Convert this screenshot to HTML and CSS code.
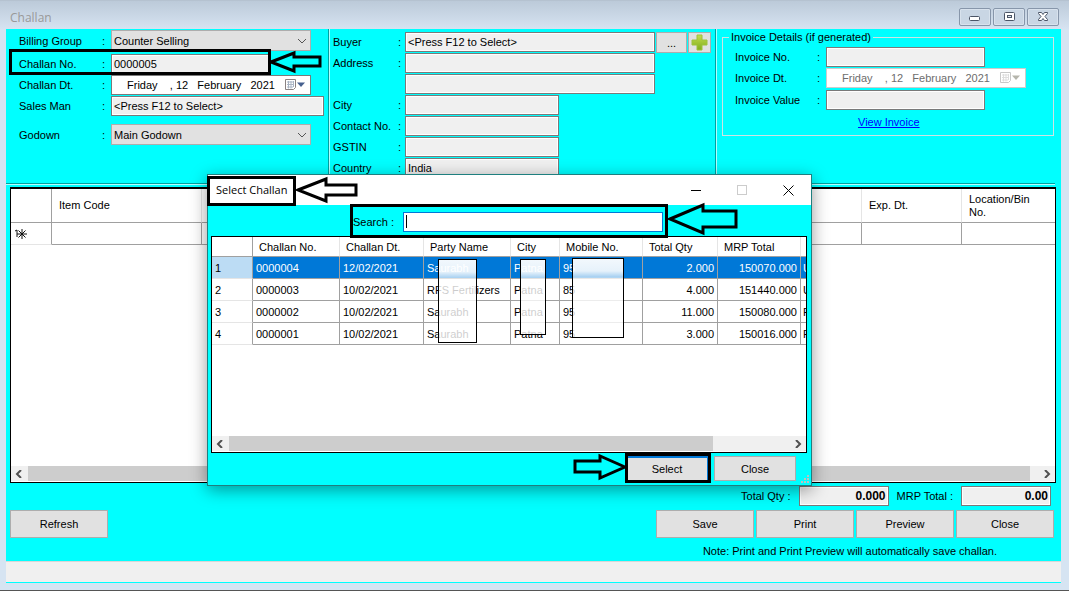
FILE: index.html
```html
<!DOCTYPE html>
<html lang="en">
	<head>
		<meta charset="utf-8" />
		<meta name="viewport" content="width=device-width, initial-scale=1" />
		<title>Challan</title>
		<link rel="stylesheet" href="styles.css">
	</head>

	<body>
		<div class="window">
			<header class="titlebar">
				<h1>Challan</h1>
				<div class="window-buttons">
					<button type="button" aria-label="Minimize">
						<svg width="14" height="12" viewBox="0 0 14 12"><rect x="1.5" y="5.5" width="10" height="4" rx="1" fill="#fff" stroke="#4b5566"/></svg>
					</button>
					<button type="button" aria-label="Restore">
						<svg width="14" height="12" viewBox="0 0 14 12"><rect x="2.5" y="1.5" width="10" height="8" rx="1" fill="#fff" stroke="#4b5566"/><rect x="5.5" y="4.5" width="4" height="2" fill="#dfe6ef" stroke="#4b5566"/></svg>
					</button>
					<button type="button" aria-label="Close window">
						<svg width="14" height="12" viewBox="0 0 14 12"><path d="M2.5 1.5h3L7 3.500l1.500-2h3v1L9 5.500l2.500 3v1h-3L7 7.500l-1.500 2h-3v-1L5 5.500 2.500 2.500z" fill="#fff" stroke="#4b5566"/></svg>
					</button>
				</div>
			</header>

			<main class="client">
				<form class="details">
					<section class="panel challan-panel">
						<div class="row">
							<label for="group">Billing Group</label><span>:</span>
							<div class="combo">
								<select id="group"><option>Counter Selling</option></select>
								<svg width="10" height="6" viewBox="0 0 10 6"><path d="M1 1l4 4 4-4" fill="none" stroke="#555"/></svg>
							</div>
						</div>
						<div class="row spaced">
							<label for="number">Challan No.</label><span>:</span>
							<input class="short" id="number" type="text" value="0000005">
						</div>
						<div class="row">
							<label for="date">Challan Dt.</label><span>:</span>
							<div class="date">
								<input id="date" type="text" value="Friday    , 12   February   2021">
								<button type="button" aria-label="Pick challan date">
									<svg width="22" height="14" viewBox="0 0 22 14"><path d="M1.500 1.500h10v8l-2 2h-8z" fill="#fff" stroke="#8a8282"/><path d="M3 4h7M3 6.500h7M3 9h6M4.500 3v7.500M7 3v7.500M9.500 3v6" stroke="#a9b4c4" fill="none"/><path d="M13 4.500h8l-4 4.500z" fill="#46608f"/></svg>
								</button>
							</div>
						</div>
						<div class="row">
							<label for="salesman">Sales Man</label><span>:</span>
							<input class="wide" id="salesman" type="text" value="&lt;Press F12 to Select&gt;">
						</div>
						<div class="row apart">
							<label for="godown">Godown</label><span>:</span>
							<div class="combo">
								<select id="godown"><option>Main Godown</option></select>
								<svg width="10" height="6" viewBox="0 0 10 6"><path d="M1 1l4 4 4-4" fill="none" stroke="#555"/></svg>
							</div>
						</div>
					</section>

					<section class="panel buyer-panel">
						<div class="row">
							<label for="buyer">Buyer</label><span>:</span>
							<div class="buyer">
								<input id="buyer" type="text" value="&lt;Press F12 to Select&gt;">
								<button class="more" type="button">...</button>
								<button class="add" type="button" aria-label="Add buyer">
									<svg width="17" height="17" viewBox="0 0 17 17"><defs><linearGradient id="green" x2="0" y2="1"><stop stop-color="#c3dc4e"/><stop offset="1" stop-color="#7fae1c"/></linearGradient></defs><path d="M6 1h5v5h5v5h-5v5H6v-5H1V6h5z" fill="url(#green)" stroke="#9cc23c"/></svg>
								</button>
							</div>
						</div>
						<div class="row">
							<label for="address">Address</label><span>:</span>
							<input class="full" id="address" type="text">
						</div>
						<div class="row">
							<i></i><i></i>
							<input class="full" type="text" aria-label="Address line 2">
						</div>
						<div class="row">
							<label for="city">City</label><span>:</span>
							<input id="city" type="text">
						</div>
						<div class="row">
							<label for="contact">Contact No.</label><span>:</span>
							<input id="contact" type="text">
						</div>
						<div class="row">
							<label for="gstin">GSTIN</label><span>:</span>
							<input id="gstin" type="text">
						</div>
						<div class="row">
							<label for="country">Country</label><span>:</span>
							<input id="country" type="text" value="India">
						</div>
					</section>

					<section class="invoice-panel">
						<fieldset>
							<legend>Invoice Details (if generated)</legend>
							<div class="row">
								<label for="invoice-no">Invoice No.</label><span>:</span>
								<input class="short" id="invoice-no" type="text">
							</div>
							<div class="row">
								<label for="invoice-date">Invoice Dt.</label><span>:</span>
								<div class="date disabled">
									<input id="invoice-date" type="text" value="Friday    , 12   February   2021" disabled>
									<button type="button" aria-label="Pick invoice date" disabled>
										<svg width="22" height="14" viewBox="0 0 22 14"><path d="M1.500 1.500h10v8l-2 2h-8z" fill="#fff" stroke="#c8c8c8"/><path d="M3 4h7M3 6.500h7M3 9h6M4.500 3v7.500M7 3v7.500M9.500 3v6" stroke="#ddd" fill="none"/><path d="M13 4.500h8l-4 4.500z" fill="#b5b5ac"/></svg>
									</button>
								</div>
							</div>
							<div class="row spaced">
								<label for="invoice-value">Invoice Value</label><span>:</span>
								<input class="short" id="invoice-value" type="text">
							</div>
							<a href="#invoice">View Invoice</a>
						</fieldset>
					</section>
				</form>

				<div class="grid items">
					<table>
						<colgroup><col class="mark"><col class="code"><col><col class="exp"><col class="bin"></colgroup>
						<thead>
							<tr><th></th><th>Item Code</th><th></th><th>Exp. Dt.</th><th>Location/Bin<br>No.</th></tr>
						</thead>
						<tbody>
							<tr>
								<th><svg width="14" height="12" viewBox="0 0 14 12"><path d="M1 3l2-1v7M8 1v10M3 6h10M4.500 2.500l7 7M11.500 2.500l-7 7" fill="none" stroke="#111"/></svg></th>
								<td></td><td></td><td></td><td></td>
							</tr>
						</tbody>
					</table>
					<div class="scrollbar">
						<svg width="8" height="8" viewBox="0 0 8 8"><path d="M6 0L2 4l4 4" fill="none" stroke="#505050" stroke-width="2"/></svg>
						<div class="thumb"></div>
						<svg width="8" height="8" viewBox="0 0 8 8"><path d="M2 0l4 4-4 4" fill="none" stroke="#505050" stroke-width="2"/></svg>
					</div>
				</div>

				<div class="totals">
					<label for="qty">Total Qty :</label>
					<input id="qty" type="text" value="0.000">
					<label for="mrp">MRP Total :</label>
					<input id="mrp" type="text" value="0.00">
				</div>

				<div class="actions">
					<button class="refresh" type="button">Refresh</button>
					<button type="button">Save</button>
					<button type="button">Print</button>
					<button type="button">Preview</button>
					<button type="button">Close</button>
				</div>
				<p class="note">Note: Print and Print Preview will automatically save challan.</p>
				<footer class="status"></footer>
			</main>

			<div class="mark-box mark-number"></div>
			<svg class="arrow arrow-number" width="54" height="24" viewBox="0 0 54 24"><path d="M1 12L24 3v4h26v9H24v5z"/></svg>

			<div class="dialog" role="dialog" aria-label="Select Challan">
				<header class="dialog-title">
					<h2>Select Challan</h2>
					<button type="button" aria-label="Minimize dialog"><svg width="11" height="11" viewBox="0 0 11 11"><path d="M0 5.500h10" stroke="#000"/></svg></button>
					<button type="button" aria-label="Maximize dialog" disabled><svg width="11" height="11" viewBox="0 0 11 11"><rect x=".5" y=".5" width="9" height="9" fill="none" stroke="#ccc"/></svg></button>
					<button type="button" aria-label="Close dialog"><svg width="11" height="11" viewBox="0 0 11 11"><path d="M.5.5l10 10M10.500.5l-10 10" stroke="#000"/></svg></button>
				</header>
				<div class="search">
					<label for="search">Search :</label>
					<div class="search-field"><input id="search" type="text"></div>
				</div>
				<div class="grid results">
					<table>
						<colgroup><col class="mark"><col class="no"><col class="dt"><col class="party"><col class="city"><col class="mobile"><col class="qty"><col class="mrp"><col></colgroup>
						<thead>
							<tr><th></th><th>Challan No.</th><th>Challan Dt.</th><th>Party Name</th><th>City</th><th>Mobile No.</th><th>Total Qty</th><th>MRP Total</th><th></th></tr>
						</thead>
						<tbody>
							<tr class="selected"><th>1</th><td>0000004</td><td>12/02/2021</td><td>Saurabh</td><td>Patna</td><td>95</td><td>2.000</td><td>150070.000</td><td>U</td></tr>
							<tr><th>2</th><td>0000003</td><td>10/02/2021</td><td>RFS Fertilizers</td><td>Patna</td><td>85</td><td>4.000</td><td>151440.000</td><td>U</td></tr>
							<tr><th>3</th><td>0000002</td><td>10/02/2021</td><td>Saurabh</td><td>Patna</td><td>95</td><td>11.000</td><td>150080.000</td><td>R</td></tr>
							<tr><th>4</th><td>0000001</td><td>10/02/2021</td><td>Saurabh</td><td>Patna</td><td>95</td><td>3.000</td><td>150016.000</td><td>R</td></tr>
						</tbody>
					</table>
					<div class="scrollbar">
						<svg width="8" height="8" viewBox="0 0 8 8"><path d="M6 0L2 4l4 4" fill="none" stroke="#505050" stroke-width="2"/></svg>
						<div class="thumb partial"></div>
						<svg width="8" height="8" viewBox="0 0 8 8"><path d="M2 0l4 4-4 4" fill="none" stroke="#505050" stroke-width="2"/></svg>
					</div>
				</div>
				<footer class="dialog-actions">
					<button class="default" type="button">Select</button>
					<button type="button">Close</button>
				</footer>
				<svg class="grip" width="9" height="9" viewBox="0 0 9 9"><path d="M6 0h2v2H6zM3 3h2v2H3zM6 3h2v2H6zM0 6h2v2H0zM3 6h2v2H3zM6 6h2v2H6z" fill="#bfbfbf"/></svg>

				<div class="cover cover-party"></div>
				<div class="cover cover-city"></div>
				<div class="cover cover-mobile"></div>

				<div class="mark-box mark-title"></div>
				<svg class="arrow arrow-title" width="64" height="28" viewBox="0 0 64 28"><path d="M2 14L30 3v6h30v10H30v6z"/></svg>
				<div class="mark-box mark-search"></div>
				<svg class="arrow arrow-search" width="72" height="34" viewBox="0 0 72 34"><path d="M2 17L35 3v6h33v16H35v6z"/></svg>
				<div class="mark-box mark-select"></div>
				<svg class="arrow arrow-select" width="56" height="28" viewBox="0 0 56 28"><path d="M53 14L28 3v5H3v11h25v6z"/></svg>
			</div>
		</div>
	</body>
</html>
```
FILE: styles.css
```css
* {
	box-sizing: border-box;
}

body {
	margin: 0;
	font-family: 'Liberation Sans', Arial, sans-serif;
	font-size: 11px;
	line-height: 14px;
	color: #000;
}

input,
select,
button {
	margin: 0;
	font: inherit;
	color: #000;
}

svg {
	display: block;
}

.window {
	position: relative;
	display: flex;
	flex-direction: column;
	min-height: 100vh;
	padding: 0 8px 7px 6px;
	background: #d6e4f2;
	border-bottom: 1px solid #555;
}

.titlebar {
	display: flex;
	justify-content: space-between;
	height: 29px;
	margin: 0 -8px 0 -6px;
	padding: 7px 10px 0;
	background: linear-gradient(#bccad9, #d6e3f1);
	border-top: 1px solid #b5c2d0;
}

.titlebar h1 {
	margin: 2px 0 0;
	font: 12px/16px 'Open Sans', sans-serif;
	color: #999;
}

.window-buttons {
	display: flex;
	gap: 2px;
}

.window-buttons button {
	display: grid;
	place-items: center;
	width: 32px;
	height: 18px;
	padding: 0;
	background: #c9d6e4;
	border: 1px solid #8796aa;
	border-radius: 2px;
	box-shadow: inset 0 0 0 1px #d8e2ed;
}

.client {
	display: flex;
	flex: 1;
	flex-direction: column;
	background: #0ff;
	border-bottom: 1px solid #0ff;
}

/* form */

.details {
	display: grid;
	grid-template-columns: 323px 387px 1fr;
	height: 155px;
	margin: 0 6px 3px 0;
	padding-left: 0;
	border-bottom: 1px solid #00a0a0;
	box-shadow: 0 1px 0 #b0ffff;
}

.panel {
	display: flex;
	flex-direction: column;
	gap: 1px;
	border-right: 1px solid #00a0a0;
	box-shadow: 1px 0 0 #b0ffff;
	overflow: hidden;
}

.row {
	display: grid;
	grid-template-columns: 83px 9px auto;
	justify-content: start;
	align-items: center;
}

.row input {
	width: 154px;
	height: 20px;
	padding: 0 2px;
	background: #f0f0f0;
	border: 1px solid #7a7a7a;
	box-shadow: inset 0 0 0 1px #fff;
}

.challan-panel {
	padding: 1px 0 0 13px;
}

.challan-panel .spaced {
	margin-top: 2px;
}

.challan-panel .apart {
	margin-top: 7px;
}

.row .short {
	width: 159px;
}

.row .wide {
	width: 213px;
}

.row .full {
	width: 250px;
}

.combo {
	display: grid;
	align-items: center;
}

.combo select,
.combo svg {
	grid-area: 1 / 1;
}

.combo select {
	width: 200px;
	height: 21px;
	padding: 0 2px;
	appearance: none;
	background: #e1e1e1;
	border: 1px solid #adadad;
	border-radius: 0;
}

.combo svg {
	justify-self: end;
	margin-right: 4px;
	pointer-events: none;
}

.date {
	display: flex;
	align-items: center;
	width: 200px;
	height: 20px;
	background: #fff;
	border: 1px solid #7a7a7a;
}

.row .date input {
	flex: 1;
	width: 0;
	height: 18px;
	padding: 0 0 0 15px;
	background: none;
	border: 0;
	box-shadow: none;
}

.date button {
	padding: 0 4px 0 0;
	background: none;
	border: 0;
}

.date.disabled {
	border-color: #ccc;
}

.date.disabled input {
	color: #6d6d6d;
}

.buyer-panel {
	padding: 3px 0 0 4px;
}

.buyer-panel .row {
	grid-template-columns: 65px 7px auto;
}

.buyer {
	display: flex;
	gap: 1px;
	height: 20px;
}

.row .buyer input {
	width: 250px;
}

.buyer button {
	display: grid;
	place-items: center;
	height: 21px;
	padding: 0;
	background: #e1e1e1;
	border: 1px solid #adadad;
}

.buyer .more {
	width: 31px;
}

.buyer .add {
	width: 23px;
}

.invoice-panel {
	padding: 1px 1px 0 6px;
}

fieldset {
	height: 106px;
	margin: 0;
	padding: 3px 12px 0;
	border: 1px solid #cfe3e3;
}

legend {
	margin-left: -6px;
	padding: 0 2px;
}

fieldset .row {
	grid-template-columns: 82px 9px auto;
	margin-bottom: 1px;
}

fieldset .spaced {
	margin-top: 2px;
}

fieldset a {
	display: block;
	margin: 5px 0 0 123px;
	color: #00f;
}

/* grids */

.grid {
	display: flex;
	flex-direction: column;
	justify-content: space-between;
	overflow: hidden;
	background: #fff;
	border: 1px solid #000;
}

.grid table {
	width: 100%;
	table-layout: fixed;
	border-collapse: separate;
	border-spacing: 0;
}

.grid th {
	font-weight: normal;
	text-align: left;
}

.grid thead th {
	padding: 0 6px;
	border-right: 1px solid #e5e5e5;
	border-bottom: 1px solid #a0a0a0;
}

.grid thead th:first-child,
.grid tbody td {
	border-right: 1px solid #a0a0a0;
}

.grid tbody td {
	border-bottom: 1px solid #a0a0a0;
}

.grid tbody th {
	border-right: 1px solid #a0a0a0;
	border-bottom: 1px solid #e5e5e5;
}

.grid tr :last-child {
	border-right: 0;
}

.items {
	flex: 1;
	margin: 0 5px 3px 4px;
	border-top-width: 2px;
}

.items thead th {
	height: 34px;
	padding: 0 7px;
	line-height: 13px;
}

.items tbody tr {
	height: 22px;
}

.items tbody th {
	padding: 0 3px;
}

.items .mark {
	width: 41px;
}

.items .code {
	width: 150px;
}

.items .exp {
	width: 100px;
}

.items .bin {
	width: 93px;
}

.scrollbar {
	display: flex;
	align-items: center;
	height: 16px;
	padding: 0 4px;
	gap: 5px;
	background: #f0f0f0;
	border-bottom: 1px solid #fff;
}

.thumb {
	flex: 1;
	height: 15px;
	margin-right: 8px;
	background: #cdcdcd;
}

.thumb.partial {
	margin-right: 76px;
}

/* bottom part */

.totals {
	display: flex;
	align-items: center;
	justify-content: flex-end;
	gap: 8px;
	padding-right: 10px;
}

.totals input {
	width: 90px;
	height: 20px;
	padding: 0 2px;
	font-size: 12px;
	font-weight: bold;
	text-align: right;
	background: #f0f0f0;
	border: 1px solid #7a7a7a;
	box-shadow: inset 0 0 0 1px #fff;
}

.actions {
	display: flex;
	gap: 2px;
	padding: 4px 7px 0 4px;
}

.actions button,
.dialog-actions button {
	background: #e1e1e1;
	border: 1px solid #adadad;
}

.actions button {
	width: 98px;
	height: 28px;
}

.actions .refresh {
	margin-right: auto;
}

.note {
	margin: 6px 64px 3px;
	text-align: right;
}

.status {
	height: 21px;
	background: #f0f0f0;
	border-top: 1px solid #d7d7d7;
}

/* dialog */

.dialog {
	position: absolute;
	top: 174px;
	left: 207px;
	display: flex;
	flex-direction: column;
	width: 605px;
	height: 312px;
	background: #0ff;
	border: 1px solid #1f7f7f;
	box-shadow: 0 4px 16px rgba(0, 0, 0, 0.4);
}

.dialog-title {
	display: flex;
	align-items: center;
	height: 30px;
	background: #fff;
}

.dialog-title h2 {
	margin: 0 auto 0 8px;
	font: 11px/16px 'Open Sans', sans-serif;
}

.dialog-title button {
	display: grid;
	place-items: center;
	width: 46px;
	height: 28px;
	padding: 0;
	background: none;
	border: 0;
}

.search {
	display: flex;
	align-items: center;
	height: 31px;
	padding: 2px 0 0 145px;
}

.search label {
	width: 50px;
}

.search-field {
	display: flex;
	align-items: center;
	width: 260px;
	height: 20px;
	background: #fff;
	border: 1px solid #0078d7;
}

/* resting text cursor */
.search-field::before {
	content: '';
	width: 1px;
	height: 13px;
	margin-left: 2px;
	background: #000;
}

.search-field input {
	flex: 1;
	width: 0;
	background: none;
	border: 0;
	outline: 0;
}

.results {
	flex: 1;
	margin: 0 4px 0 3px;
}

.results tr {
	height: 22px;
}

.results thead tr {
	height: 20px;
}

.results th,
.results td {
	padding: 0 3px;
	white-space: nowrap;
}

.results thead th {
	padding: 0 6px;
}

.results .mark {
	width: 41px;
}

.results .no {
	width: 87px;
}

.results .dt {
	width: 84px;
}

.results .party {
	width: 87px;
}

.results .city {
	width: 49px;
}

.results .mobile {
	width: 83px;
}

.results .qty {
	width: 75px;
}

.results .mrp {
	width: 83px;
}

.results tr :last-child {
	padding: 0 0 0 2px;
}

.results td:nth-child(7),
.results td:nth-child(8) {
	text-align: right;
}

.results .selected td {
	color: #fff;
	background: #0078d7;
}

.results .selected th {
	background: #bcdcf4;
}

.dialog-actions {
	display: flex;
	justify-content: flex-end;
	gap: 6px;
	height: 32px;
	padding: 3px 15px 4px;
}

.dialog-actions button {
	width: 82px;
}

.dialog-actions .default {
	border: 1px solid #0078d7;
	border-top-width: 2px;
}

.grip {
	position: absolute;
	right: 1px;
	bottom: 1px;
}

/* covers over private columns */

.cover {
	position: absolute;
	background: linear-gradient(rgba(255, 255, 255, 0.95), rgba(255, 255, 255, 0.9) 12px, rgba(255, 255, 255, 0.65) 18px, rgba(255, 255, 255, 0.8) 20px);
	border: 1px solid #000;
}

.cover-party {
	top: 84px;
	left: 230px;
	width: 39px;
	height: 84px;
}

.cover-city {
	top: 84px;
	left: 312px;
	width: 26px;
	height: 76px;
}

.cover-mobile {
	top: 83px;
	left: 364px;
	width: 52px;
	height: 80px;
}

/* callouts */

.mark-box,
.arrow {
	position: absolute;
	pointer-events: none;
}

.mark-box {
	border: 3px solid #000;
}

.arrow path {
	fill: none;
	stroke: #000;
	stroke-width: 3;
}

.mark-number {
	top: 49px;
	left: 9px;
	width: 262px;
	height: 26px;
}

.arrow-number {
	top: 50px;
	left: 270px;
}

.mark-title {
	top: 1px;
	left: -1px;
	width: 89px;
	height: 30px;
}

.arrow-title {
	top: 1px;
	left: 88px;
}

.mark-search {
	top: 29px;
	left: 142px;
	width: 318px;
	height: 34px;
}

.arrow-search {
	top: 27px;
	left: 460px;
}

.mark-select {
	top: 278px;
	left: 417px;
	width: 86px;
	height: 30px;
}

.arrow-select {
	top: 278px;
	left: 364px;
}
```
